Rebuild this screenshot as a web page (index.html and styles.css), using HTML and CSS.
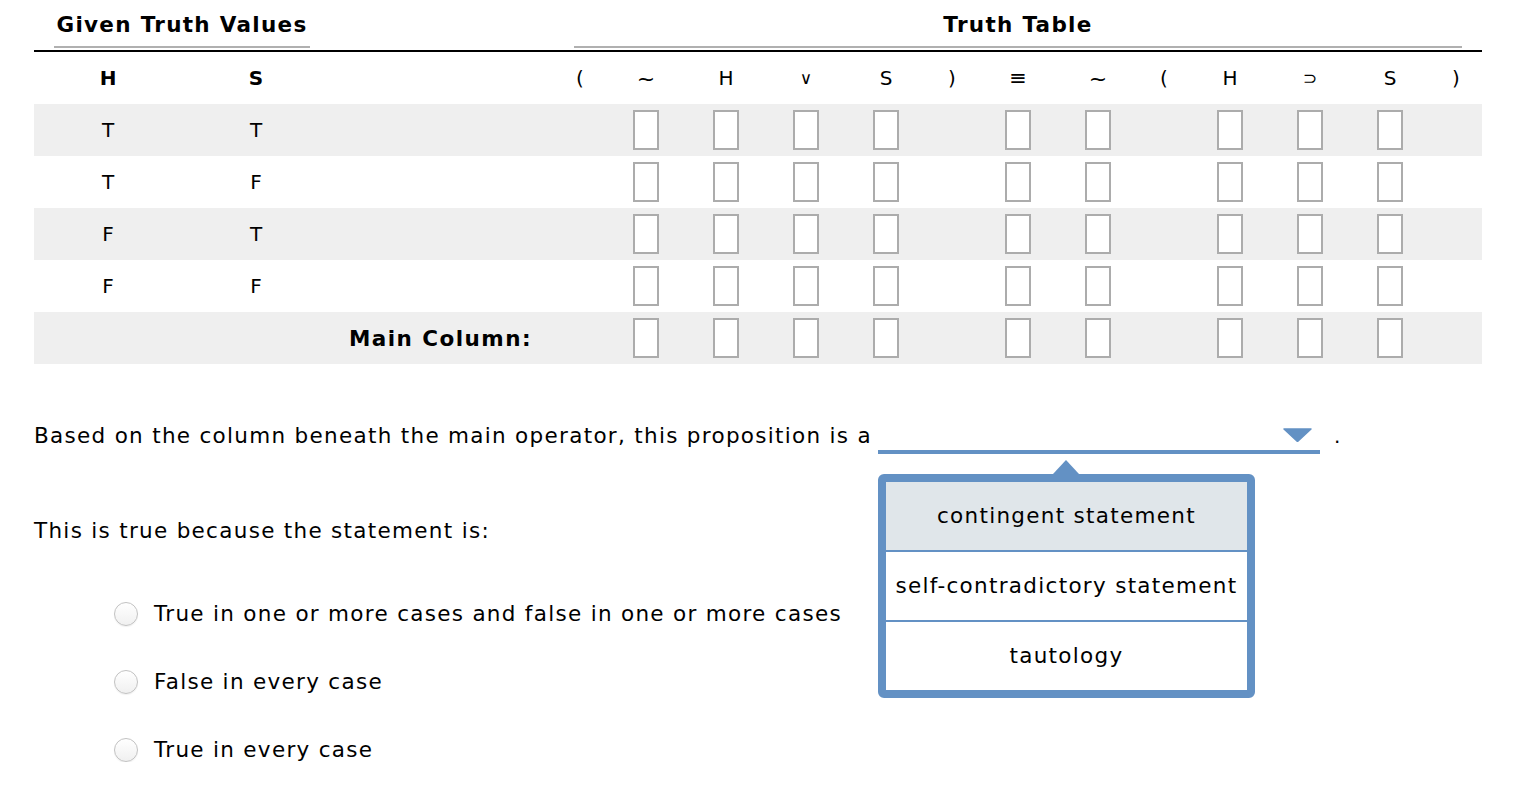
FILE: index.html
```html
<!DOCTYPE html>
<html>
<head>
<meta charset="utf-8">
<link rel="stylesheet" href="styles.css">
</head>
<body>
<div class="page">
  <table class="tt">
    <colgroup>
      <col class="c-v"><col class="c-v"><col class="c-sp">
      <col class="c-p"><col class="c-s"><col class="c-s"><col class="c-s"><col class="c-s"><col class="c-p">
      <col class="c-s"><col class="c-s"><col class="c-p"><col class="c-s"><col class="c-s"><col class="c-s"><col class="c-p">
    </colgroup>
    <thead>
      <tr class="titles">
        <th colspan="2"><span class="title">Given Truth Values</span></th>
        <th class="blank"></th>
        <th colspan="13"><span class="title">Truth Table</span></th>
      </tr>
      <tr class="cols">
        <th>H</th><th>S</th><th></th>
        <td>(</td><td class="op">~</td><td>H</td><td class="op sm">∨</td><td>S</td><td>)</td>
        <td class="op eq">≡</td><td class="op">~</td><td>(</td><td>H</td><td class="op sm">⊃</td><td>S</td><td>)</td>
      </tr>
    </thead>
    <tbody>
      <tr class="g">
        <td>T</td><td>T</td><td></td>
        <td></td><td><span class="box"></span></td><td><span class="box"></span></td><td><span class="box"></span></td><td><span class="box"></span></td><td></td>
        <td><span class="box"></span></td><td><span class="box"></span></td><td></td><td><span class="box"></span></td><td><span class="box"></span></td><td><span class="box"></span></td><td></td>
      </tr>
      <tr>
        <td>T</td><td>F</td><td></td>
        <td></td><td><span class="box"></span></td><td><span class="box"></span></td><td><span class="box"></span></td><td><span class="box"></span></td><td></td>
        <td><span class="box"></span></td><td><span class="box"></span></td><td></td><td><span class="box"></span></td><td><span class="box"></span></td><td><span class="box"></span></td><td></td>
      </tr>
      <tr class="g">
        <td>F</td><td>T</td><td></td>
        <td></td><td><span class="box"></span></td><td><span class="box"></span></td><td><span class="box"></span></td><td><span class="box"></span></td><td></td>
        <td><span class="box"></span></td><td><span class="box"></span></td><td></td><td><span class="box"></span></td><td><span class="box"></span></td><td><span class="box"></span></td><td></td>
      </tr>
      <tr>
        <td>F</td><td>F</td><td></td>
        <td></td><td><span class="box"></span></td><td><span class="box"></span></td><td><span class="box"></span></td><td><span class="box"></span></td><td></td>
        <td><span class="box"></span></td><td><span class="box"></span></td><td></td><td><span class="box"></span></td><td><span class="box"></span></td><td><span class="box"></span></td><td></td>
      </tr>
      <tr class="g">
        <td colspan="3" class="mainlabel">Main Column:</td>
        <td></td><td><span class="box"></span></td><td><span class="box"></span></td><td><span class="box"></span></td><td><span class="box"></span></td><td></td>
        <td><span class="box"></span></td><td><span class="box"></span></td><td></td><td><span class="box"></span></td><td><span class="box"></span></td><td><span class="box"></span></td><td></td>
      </tr>
    </tbody>
  </table>

  <div class="q1">
    <span class="txt">Based on the column beneath the main operator, this proposition is a</span>
    <div class="dd">
      <svg class="arrow" viewBox="0 0 29 14" aria-hidden="true"><polygon points="1,1 28,1 14.5,13.5" fill="#6391c4" stroke="#6391c4" stroke-width="1.5" stroke-linejoin="round"/></svg>
      <div class="menu">
        <div class="item sel">contingent statement</div>
        <div class="item">self-contradictory statement</div>
        <div class="item">tautology</div>
      </div>
    </div>
    <span class="period">.</span>
  </div>

  <div class="q2 txt">This is true because the statement is:</div>

  <div class="opts">
    <div class="opt"><span class="radio"></span><span class="txt">True in one or more cases and false in one or more cases</span></div>
    <div class="opt"><span class="radio"></span><span class="txt">False in every case</span></div>
    <div class="opt"><span class="radio"></span><span class="txt">True in every case</span></div>
  </div>
</div>
</body>
</html>
```

FILE: styles.css
```css
* { box-sizing: border-box; }

body {
  margin: 0;
  font-family: "DejaVu Sans", Verdana, sans-serif;
  font-size: 20px;
  color: #000;
  background: #fff;
}

.page {
  padding-left: 34px;
}

.txt {
  font-size: 21.5px;
  letter-spacing: 1.3px;
}

.tt {
  border-collapse: separate;
  border-spacing: 0;
  table-layout: fixed;
  width: 1448px;
}

.c-v { width: 148px; }
.c-sp { width: 224px; }
.c-p { width: 52px; }
.c-s { width: 80px; }

.tt th,
.tt td {
  padding: 0;
  height: 52px;
  text-align: center;
  vertical-align: middle;
  font-weight: normal;
}

.tt .titles th {
  height: auto;
  padding: 13px 20px 2px;
  vertical-align: bottom;
  font-weight: bold;
  font-size: 21.5px;
  letter-spacing: 1.3px;
  white-space: nowrap;
  border-bottom: 2px solid #000;
}

.tt .titles th.blank { padding: 0; }

.title {
  display: block;
  line-height: 24px;
  padding-bottom: 9px;
  border-bottom: 2px solid #b0b0b0;
}

.tt .cols th { font-weight: bold; }

.tt .op { font-size: 22px; }
.tt .op.sm { font-size: 17px; }
.tt .op.eq { font-size: 21px; }

.tt tr.g td { background: #efefef; }

.box {
  display: block;
  width: 26px;
  height: 40px;
  margin: 0 auto;
  border: 2px solid #acacac;
  background: #fff;
}

.tt td.mainlabel {
  text-align: right;
  padding-right: 22px;
  font-weight: bold;
  font-size: 21.5px;
  letter-spacing: 1.45px;
}

.q1 {
  display: flex;
  align-items: flex-start;
  margin-top: 60px;
  line-height: 24px;
}

.dd {
  position: relative;
  width: 442px;
  height: 30px;
  margin-left: 6px;
  border-bottom: 4px solid #6391c4;
  display: flex;
  justify-content: flex-end;
  padding: 4px 8px 0 0;
}

.arrow {
  width: 29px;
  height: 14px;
  display: block;
}

.period { margin-left: 14px; }

.menu {
  position: absolute;
  top: 50px;
  left: 0;
  width: 377px;
  border: 8px solid #6391c4;
  border-radius: 6px;
  background: #fff;
}

.menu::before {
  content: "";
  position: absolute;
  top: -22px;
  left: calc(50% - 13px);
  border-left: 13px solid transparent;
  border-right: 13px solid transparent;
  border-bottom: 14px solid #6391c4;
}

.item {
  height: 68px;
  display: flex;
  align-items: center;
  justify-content: center;
  white-space: nowrap;
  font-size: 21.5px;
  letter-spacing: 1.3px;
}

.item + .item {
  height: 70px;
  border-top: 2px solid #6391c4;
}

.item.sel { background: #e0e6ea; }

.q2 {
  margin-top: 65px;
  line-height: 24px;
}

.opts {
  margin-top: 59px;
  padding-left: 80px;
}

.opt {
  display: flex;
  align-items: center;
  gap: 16px;
  height: 24px;
  line-height: 24px;
}

.opt + .opt { margin-top: 44px; }

.radio {
  width: 24px;
  height: 24px;
  flex: none;
  border-radius: 50%;
  border: 1px solid #c2c2c2;
  background: linear-gradient(#ffffff, #f0f0f0);
  box-shadow: 0 1px 1px rgba(0, 0, 0, 0.06);
}
```
